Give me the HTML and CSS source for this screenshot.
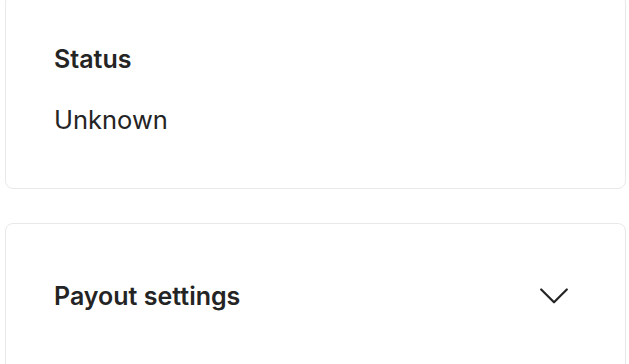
FILE: index.html
```html
<!DOCTYPE html>
<html lang="en">
<head>
<meta charset="utf-8">
<title>Account</title>
<link rel="stylesheet" href="styles.css">
</head>
<body>
<main class="page">
  <section class="card card--status">
    <h2 class="card-title">Status</h2>
    <p class="card-value">Unknown</p>
  </section>
  <section class="card">
    <div class="card-header">
      <h2 class="card-title">Payout settings</h2>
      <button class="toggle" type="button" aria-label="Expand payout settings">
        <svg width="28" height="16" viewBox="0 0 28 16" aria-hidden="true">
          <polyline points="1.2,1.5 14,14.3 26.8,1.5" fill="none" stroke="#242424" stroke-width="2.2" stroke-linecap="round" stroke-linejoin="round"/>
        </svg>
      </button>
    </div>
    <div class="card-body"></div>
  </section>
</main>
</body>
</html>
```

FILE: styles.css
```css
* { box-sizing: border-box; }
html, body { margin: 0; padding: 0; background: #ffffff; }
body {
  font-family: Inter, "Liberation Sans", sans-serif;
  color: #242424;
  overflow: hidden;
}
.page {
  display: flex;
  flex-direction: column;
  gap: 34px;
  margin-top: -6px;
  padding: 0 3px 0 5px;
}
.card {
  border: 1px solid #e9e9e9;
  border-radius: 8px;
  padding: 48px;
  background: #fff;
}
.card--status { padding-bottom: 52px; }
.card-title {
  margin: 0;
  font-size: 25px;
  line-height: 32px;
  font-weight: 600;
}
.card-value {
  margin: 29px 0 0;
  font-size: 25.5px;
  line-height: 32px;
  font-weight: 400;
}
.card-header {
  display: flex;
  align-items: center;
  justify-content: space-between;
  height: 48px;
}
.toggle {
  width: 48px;
  height: 48px;
  border: 0;
  padding: 0 0 0 2px;
  background: none;
  display: flex;
  align-items: center;
  justify-content: center;
}
.card-body { height: 48px; }
```
